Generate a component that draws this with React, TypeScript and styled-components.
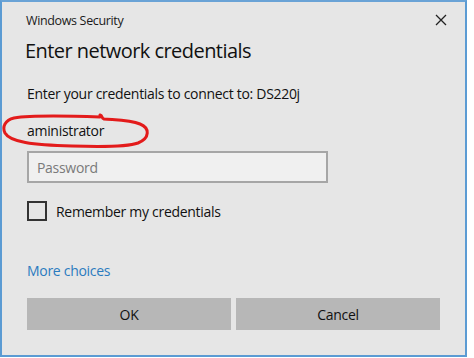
import React from "react";
import styled, { createGlobalStyle } from "styled-components";

const Global = createGlobalStyle`
  html, body { margin: 0; padding: 0; background: #ffffff; }
  body { font-family: "Open Sans", "Noto Sans", sans-serif; }
`;

const Page = styled.div`
  width: 474px;
  height: 358px;
  display: flex;
  align-items: flex-start;
  background: #ffffff;
  overflow: hidden;
`;

const Dialog = styled.div`
  position: relative;
  box-sizing: border-box;
  width: 467px;
  height: 357px;
  background: #e6e6e6;
  border: 2px solid #5b9bd3;
  border-top-color: #6aa3d6;
  display: flex;
  flex-direction: column;
  padding: 0 18px 0 23px;
  color: #1a1a1a;
`;

const Header = styled.div`
  display: flex;
  align-items: center;
  justify-content: space-between;
  height: 32px;
  margin-top: 2px;
`;

const Caption = styled.div`
  font-size: 12.5px;
  margin-left: 1px;
  letter-spacing: -0.35px;
  color: #1a1a1a;
`;

const Close = styled.div`
  width: 12px;
  height: 12px;
  display: flex;
`;

const Heading = styled.div`
  font-size: 20px;
  line-height: 28px;
  margin-top: 1px;
  letter-spacing: -0.55px;
  color: #111;
`;

const Text = styled.div`
  font-size: 14px;
  line-height: 20px;
  margin-left: 2px;
  letter-spacing: -0.3px;
  color: #111;
`;

const Prompt = styled(Text)`
  margin-top: 19px;
`;

const UserName = styled(Text)`
  position: relative;
  margin-top: 17px;
`;

const Annotation = styled.svg`
  position: absolute;
  left: -25px;
  top: -6px;
  width: 160px;
  height: 40px;
  overflow: visible;
  pointer-events: none;
`;

const Input = styled.div`
  box-sizing: border-box;
  width: 301px;
  height: 32px;
  margin-top: 10px;
  margin-left: 2px;
  border: 2px solid #a6a6a6;
  background: #f0f0f0;
  display: flex;
  align-items: center;
  padding-left: 8px;
  font-size: 14px;
  letter-spacing: -0.3px;
  color: #7a7a7a;
`;

const CheckRow = styled.label`
  display: flex;
  align-items: center;
  gap: 9px;
  margin-top: 18px;
  margin-left: 2px;
  font-size: 14px;
  letter-spacing: -0.3px;
  color: #111;
`;

const Box = styled.span`
  box-sizing: border-box;
  width: 20px;
  height: 20px;
  border: 2px solid #333333;
  background: #e6e6e6;
`;

const Link = styled(Text)`
  margin-top: 40px;
  color: #2b7bbf;
`;

const Buttons = styled.div`
  display: grid;
  grid-template-columns: 204px 204px;
  column-gap: 5px;
  margin-top: 17px;
  margin-left: 2px;
`;

const Button = styled.div`
  height: 32px;
  background: #b7b7b7;
  display: flex;
  align-items: center;
  justify-content: center;
  font-size: 14px;
  letter-spacing: -0.3px;
  color: #111;
`;

export default function App() {
  return (
    <>
      <Global />
      <Page>
        <Dialog>
          <Header>
            <Caption>Windows Security</Caption>
            <Close>
              <svg width="12" height="12" viewBox="0 0 12 12">
                <path d="M1 1 L11 11 M11 1 L1 11" stroke="#222" strokeWidth="1.3" fill="none" />
              </svg>
            </Close>
          </Header>
          <Heading>Enter network credentials</Heading>
          <Prompt>Enter your credentials to connect to: DS220j</Prompt>
          <UserName>
            aministrator
            <Annotation viewBox="0 0 160 40">
              <path
                d="M98 2 C70 1 30 0 12 3 C3 5 0 12 3 18 C8 27 30 30 70 31 C100 32 125 32 136 28 C148 23 148 13 138 9 C128 5 112 5 102 4 C99 3 101 1 98 0"
                stroke="#e31b1b"
                strokeWidth="3"
                fill="none"
                strokeLinecap="round"
              />
            </Annotation>
          </UserName>
          <Input>Password</Input>
          <CheckRow>
            <Box />
            Remember my credentials
          </CheckRow>
          <Link>More choices</Link>
          <Buttons>
            <Button>OK</Button>
            <Button>Cancel</Button>
          </Buttons>
        </Dialog>
      </Page>
    </>
  );
}
